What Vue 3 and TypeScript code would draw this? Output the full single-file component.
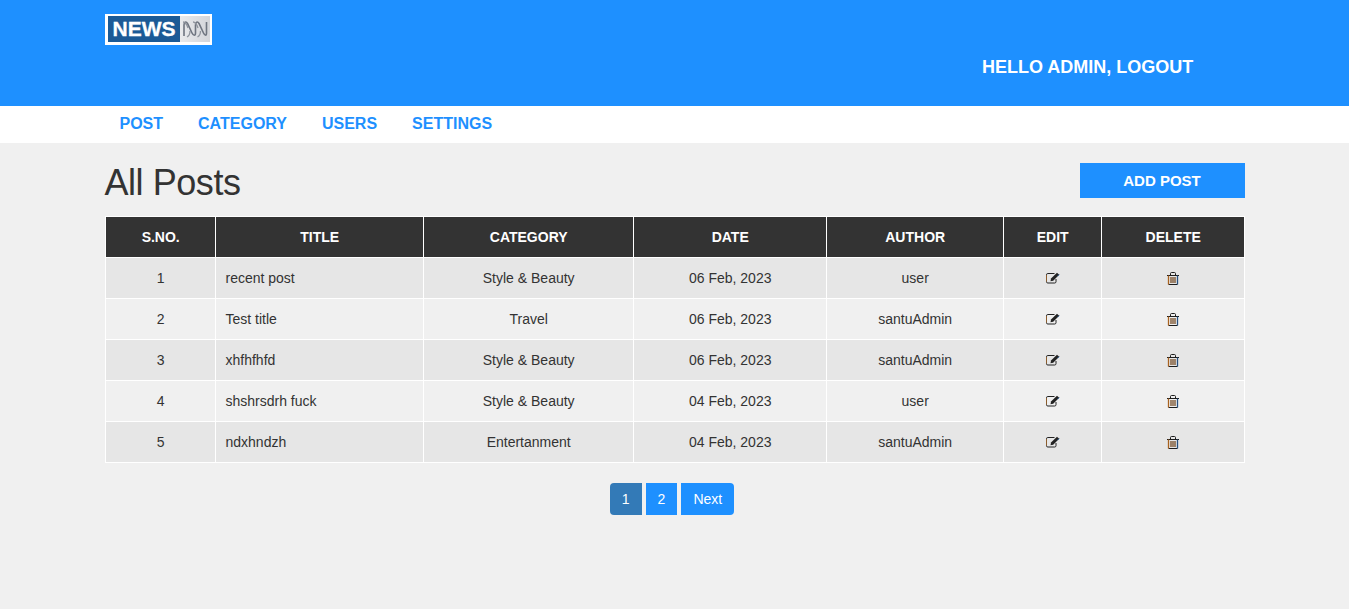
<script setup lang="ts">
interface Post {
  id: number
  title: string
  category: string
  date: string
  author: string
}

const navItems = ['Post', 'Category', 'Users', 'Settings']

const posts: Post[] = [
  { id: 1, title: 'recent post', category: 'Style & Beauty', date: '06 Feb, 2023', author: 'user' },
  { id: 2, title: 'Test title', category: 'Travel', date: '06 Feb, 2023', author: 'santuAdmin' },
  { id: 3, title: 'xhfhfhfd', category: 'Style & Beauty', date: '06 Feb, 2023', author: 'santuAdmin' },
  { id: 4, title: 'shshrsdrh fuck', category: 'Style & Beauty', date: '04 Feb, 2023', author: 'user' },
  { id: 5, title: 'ndxhndzh', category: 'Entertanment', date: '04 Feb, 2023', author: 'santuAdmin' }
]

const pages = ['1', '2', 'Next']
</script>

<template>
  <div class="page">
    <header class="header">
      <div class="container header-row">
        <a class="logo" href="#">
          <span class="logo-news">NEWS</span>
          <span class="logo-abc">
            <svg class="abc-mark" width="26" height="20" viewBox="0 0 26 20" fill="none">
              <path d="M2 17V6c0-3 2-4 3.500-1.500L10 14c1.500 3 3.500 3 3.500 0V6c0-3 2-4 3.500-1.500L21.500 14c1.500 3 3 3 3 0V3" stroke="#6f7580" stroke-width="1.600" />
              <path d="M1 3c3 0 4 3 5 6M11 3c3 0 4 3 5 6M5 18c2-1 3-4 3-6M15.500 18c2-1 3-4 3-6" stroke="#8f949d" stroke-width="1.300" />
            </svg>
          </span>
        </a>
        <div class="hello"><a href="#">hello admin, logout</a></div>
      </div>
    </header>

    <nav class="menu">
      <ul class="container menu-list">
        <li v-for="item in navItems" :key="item"><a href="#">{{ item }}</a></li>
      </ul>
    </nav>

    <main class="container content">
      <div class="title-row">
        <h1>All Posts</h1>
        <a class="add-post" href="#">add post</a>
      </div>

      <table class="posts">
        <colgroup>
          <col class="c-no" /><col class="c-title" /><col class="c-cat" /><col class="c-date" />
          <col class="c-author" /><col class="c-edit" /><col class="c-del" />
        </colgroup>
        <thead>
          <tr>
            <th>S.No.</th><th>Title</th><th>Category</th><th>Date</th><th>Author</th><th>Edit</th><th>Delete</th>
          </tr>
        </thead>
        <tbody>
          <tr v-for="post in posts" :key="post.id">
            <td>{{ post.id }}</td>
            <td class="left">{{ post.title }}</td>
            <td>{{ post.category }}</td>
            <td>{{ post.date }}</td>
            <td>{{ post.author }}</td>
            <td class="tool">
              <svg class="icon" width="15" height="13" viewBox="0 0 15 13" fill="none">
                <path d="M9.500 1.500H2.800A1.300 1.300 0 0 0 1.500 2.800v6.900A1.300 1.300 0 0 0 2.800 11h6.900A1.300 1.300 0 0 0 11 9.700V7" stroke="#222" stroke-width="1" />
                <path d="M6 6.500 12 .7l2.200 2L8.200 8.700 5.500 9.200z" fill="#222" />
                <path d="M1.500 3v6.500" stroke="#b9752f" stroke-width="1" opacity="0.7" />
                <path d="M14.200 2.600 12.600 4.200" stroke="#3a6ea8" stroke-width="1" />
              </svg>
            </td>
            <td class="tool">
              <svg class="icon" width="12" height="13" viewBox="0 0 12 13" fill="none">
                <path d="M0 3.500h12M3.500 3.500V1.500c0-.6.400-1 1-1h3c.6 0 1 .4 1 1v2" stroke="#1c1c1c" stroke-width="1" />
                <path d="M1.500 12.500h9" stroke="#1c1c1c" stroke-width="1" />
                <path d="M1.500 3.500v9" stroke="#a8621f" stroke-width="1.300" />
                <path d="M10.500 3.500v9" stroke="#27507f" stroke-width="1.300" />
                <path d="M4 5v6M6 5v6M8 5v6" stroke="#6b3f16" stroke-width="1.200" />
              </svg>
            </td>
          </tr>
        </tbody>
      </table>

      <ul class="pagination">
        <li v-for="(page, i) in pages" :key="page" :class="{ active: i === 0 }"><a href="#">{{ page }}</a></li>
      </ul>
    </main>
  </div>
</template>

<style>
body {
  margin: 0;
  background: #f0f0f0;
}
</style>

<style scoped>
.page {
  min-height: 609px;
  background: #f0f0f0;
  font-family: "Liberation Sans", Arial, sans-serif;
  font-size: 14px;
  line-height: 20px;
  color: #333;
}
a {
  text-decoration: none;
}
.container {
  box-sizing: border-box;
  width: 1170px;
  margin: 0 auto;
  padding: 0 15px;
}
.header {
  height: 106px;
  background: #1e90ff;
}
.header-row {
  display: flex;
  justify-content: space-between;
  padding-top: 14px;
}
.logo {
  box-sizing: border-box;
  display: flex;
  width: 107px;
  height: 31px;
  margin-left: 0.5px;
  padding: 2px 2px 3px 3px;
  background: #fff;
}
.logo-news {
  width: 72px;
  background: #1b5a96;
  color: #fff;
  font-size: 21px;
  font-weight: 700;
  line-height: 25px;
  text-align: center;
  -webkit-text-stroke: 0.3px #fff;
}
.logo-abc {
  flex: 1;
  display: flex;
  align-items: center;
  justify-content: center;
  background: linear-gradient(90deg, #e9eaec, #d3d5da);
}
.abc-mark {
  filter: blur(0.4px);
}
.hello {
  width: 262.5px;
  padding-top: 43px;
  font-size: 18px;
  font-weight: 700;
  text-transform: uppercase;
}
.hello a {
  color: #fff;
}
.menu {
  height: 37px;
  background: #fff;
}
.menu-list {
  display: flex;
  gap: 35px;
  margin: 0 auto;
  padding-left: 30px;
  list-style: none;
}
.menu-list a {
  display: block;
  color: #1e90ff;
  font-size: 16px;
  font-weight: 700;
  line-height: 35px;
  text-transform: uppercase;
}
.title-row {
  display: flex;
  align-items: flex-start;
  justify-content: space-between;
  padding-top: 20px;
}
h1 {
  margin: 0;
  font-size: 36px;
  font-weight: 500;
  line-height: 40px;
  letter-spacing: -0.45px;
}
.add-post {
  width: 165px;
  height: 35px;
  background: #1e90ff;
  color: #fff;
  font-size: 15px;
  font-weight: 700;
  line-height: 35px;
  text-align: center;
  text-transform: uppercase;
}
.posts {
  width: 1139px;
  margin-top: 13px;
  border-collapse: collapse;
  table-layout: fixed;
}
.c-no { width: 110px; }
.c-title { width: 208px; }
.c-cat { width: 210px; }
.c-date { width: 193px; }
.c-author { width: 177px; }
.c-edit { width: 98px; }
.c-del { width: 143px; }
th,
td {
  border: 1px solid #fff;
  padding: 0 9.3px 0 10.7px;
  text-align: center;
}
th {
  height: 40px;
  background: #333;
  color: #fff;
  font-weight: 700;
  text-transform: uppercase;
}
td {
  height: 40px;
}
td.left {
  padding: 0 10px;
  text-align: left;
}
td.tool {
  padding: 0 10px;
}
tbody tr:nth-child(odd) td {
  background: #e6e6e6;
}
.icon {
  display: block;
  margin: 0 auto;
}
.pagination {
  display: flex;
  justify-content: center;
  gap: 4px;
  margin: 20px 0 0;
  padding: 0 5px 0 0;
  list-style: none;
}
.pagination a {
  display: block;
  padding: 6px 12px;
  background: #1e90ff;
  color: #fff;
  line-height: 20px;
}
.pagination li:first-child a {
  border-radius: 4px 0 0 4px;
}
.pagination li:last-child a {
  border-radius: 0 4px 4px 0;
}
.pagination li.active a {
  background: #337ab7;
}
</style>
